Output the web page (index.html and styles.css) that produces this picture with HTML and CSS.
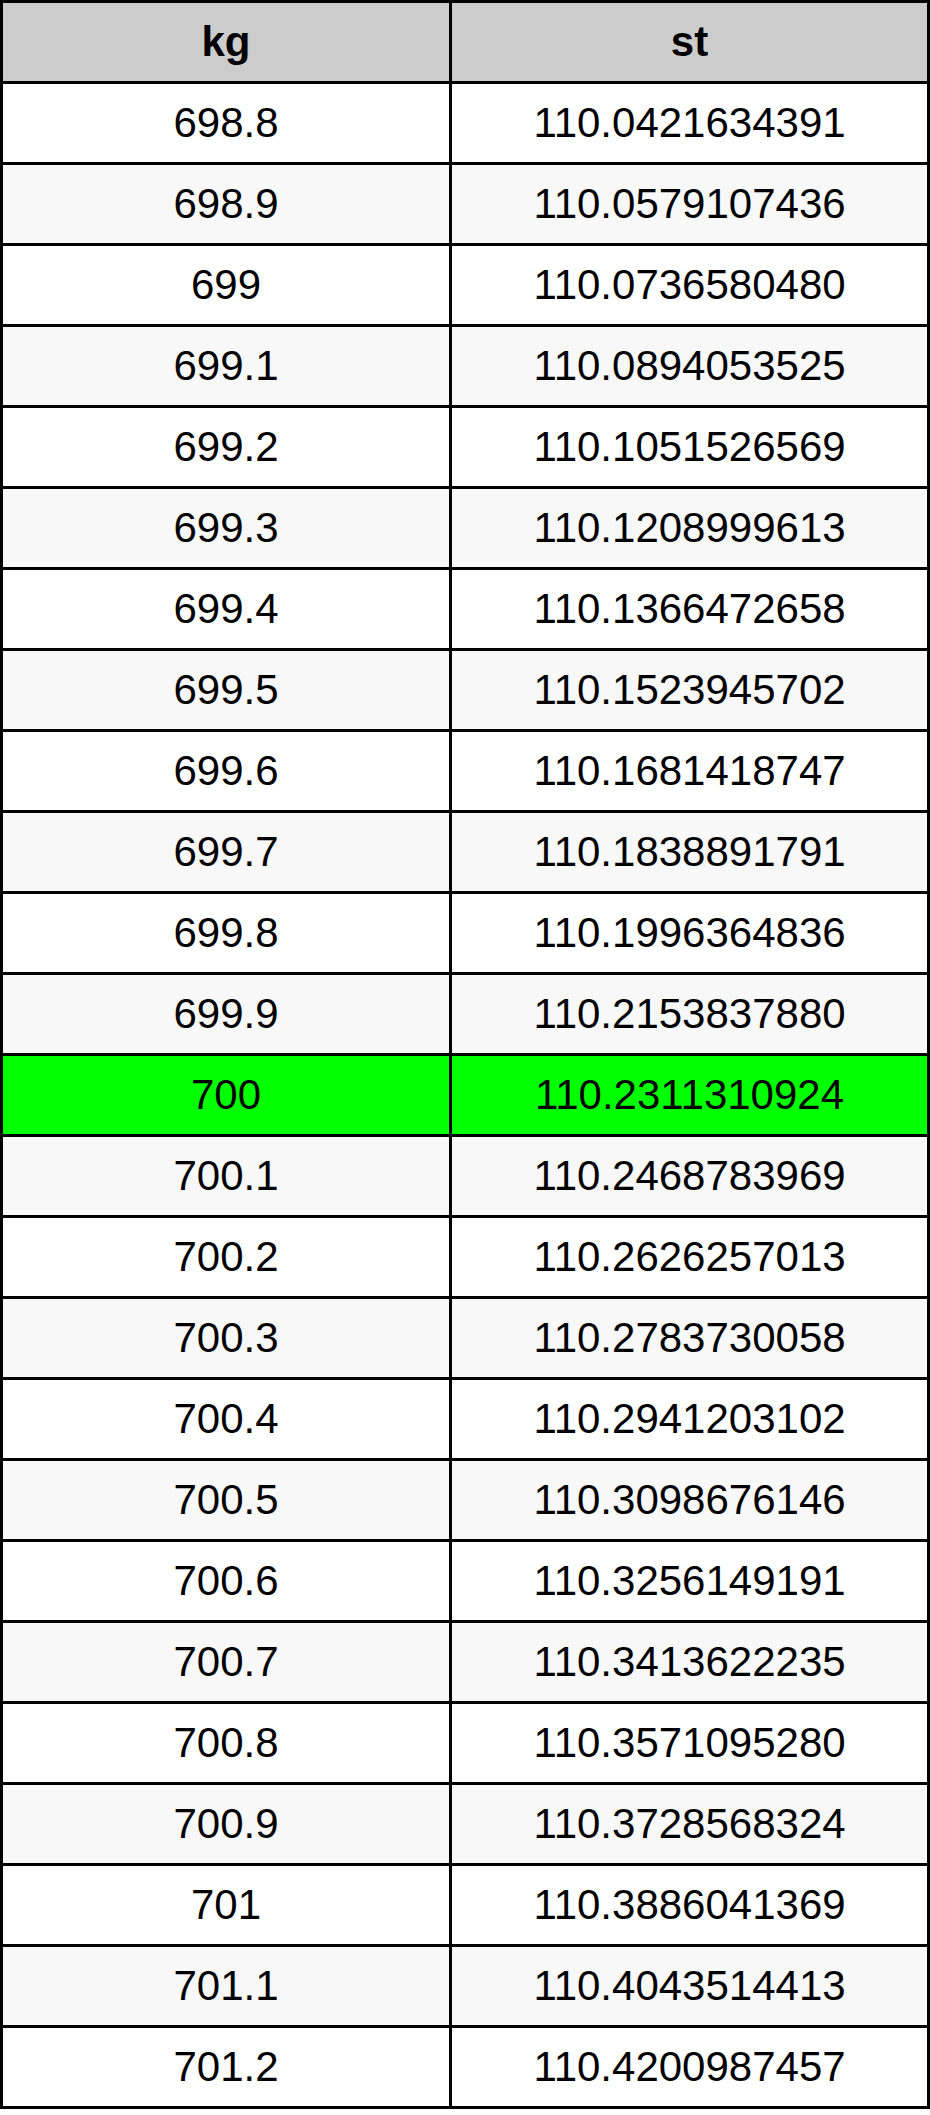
FILE: index.html
```html
<!DOCTYPE html>
<html>
<head>
<meta charset="utf-8">
<link rel="stylesheet" href="styles.css">
</head>
<body>
<table class="conv">
<thead>
<tr><th class="c1">kg</th><th class="c2">st</th></tr>
</thead>
<tbody>
<tr><td>698.8</td><td>110.0421634391</td></tr>
<tr><td>698.9</td><td>110.0579107436</td></tr>
<tr><td>699</td><td>110.0736580480</td></tr>
<tr><td>699.1</td><td>110.0894053525</td></tr>
<tr><td>699.2</td><td>110.1051526569</td></tr>
<tr><td>699.3</td><td>110.1208999613</td></tr>
<tr><td>699.4</td><td>110.1366472658</td></tr>
<tr><td>699.5</td><td>110.1523945702</td></tr>
<tr><td>699.6</td><td>110.1681418747</td></tr>
<tr><td>699.7</td><td>110.1838891791</td></tr>
<tr><td>699.8</td><td>110.1996364836</td></tr>
<tr><td>699.9</td><td>110.2153837880</td></tr>
<tr class="hl"><td>700</td><td>110.2311310924</td></tr>
<tr><td>700.1</td><td>110.2468783969</td></tr>
<tr><td>700.2</td><td>110.2626257013</td></tr>
<tr><td>700.3</td><td>110.2783730058</td></tr>
<tr><td>700.4</td><td>110.2941203102</td></tr>
<tr><td>700.5</td><td>110.3098676146</td></tr>
<tr><td>700.6</td><td>110.3256149191</td></tr>
<tr><td>700.7</td><td>110.3413622235</td></tr>
<tr><td>700.8</td><td>110.3571095280</td></tr>
<tr><td>700.9</td><td>110.3728568324</td></tr>
<tr><td>701</td><td>110.3886041369</td></tr>
<tr><td>701.1</td><td>110.4043514413</td></tr>
<tr><td>701.2</td><td>110.4200987457</td></tr>
</tbody>
</table>
</body>
</html>
```

FILE: styles.css
```css
html, body {
  margin: 0;
  padding: 0;
  background: #ffffff;
}

.conv {
  border-collapse: separate;
  border-spacing: 0;
  border-top: 3px solid #000;
  border-left: 3px solid #000;
  width: 930px;
  table-layout: fixed;
  font-family: "Liberation Sans", Arial, sans-serif;
  font-size: 42px;
  color: #000;
}

.conv th,
.conv td {
  border-right: 3px solid #000;
  border-bottom: 3px solid #000;
  height: 78px;
  padding: 0;
  text-align: center;
  vertical-align: middle;
  line-height: 1;
  box-sizing: content-box;
}

.conv th {
  background: #cccccc;
  font-weight: bold;
}

.conv .c1 {
  width: 446px;
}

.conv .c2 {
  width: 475px;
}

.conv tbody tr:nth-child(even) td {
  background: #f8f8f8;
}

.conv tbody tr.hl td {
  background: #00ff00;
}
```
